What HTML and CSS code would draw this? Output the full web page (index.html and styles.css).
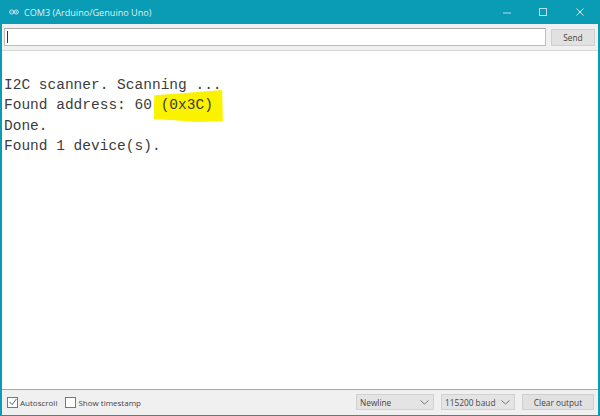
FILE: index.html
```html
<!DOCTYPE html>
<html lang="en">
<head>
<meta charset="utf-8">
<title>COM3 (Arduino/Genuino Uno)</title>
<link rel="stylesheet" href="styles.css">
</head>
<body>
<div class="window">
  <header class="titlebar">
    <svg class="logo" width="10" height="6" viewBox="0 0 14 8"><circle cx="3.800" cy="4" r="2.900" fill="none" stroke="#d8eef2" stroke-width="1.300"/><circle cx="10.200" cy="4" r="2.900" fill="none" stroke="#d8eef2" stroke-width="1.300"/><path d="M2.600 4h2.400M9 4h2.400M10.200 2.800v2.400" stroke="#d8eef2" stroke-width=".8"/></svg>
    <span class="title">COM3 (Arduino/Genuino Uno)</span>
    <div class="controls">
      <svg class="ctl" width="8" height="10" viewBox="0 0 8 10"><path d="M0 6h8" stroke="#b5e0e8" stroke-width="1"/></svg>
      <svg class="ctl" width="8" height="10" viewBox="0 0 8 10"><rect x=".5" y="1.500" width="7" height="7" fill="none" stroke="#b5e0e8" stroke-width="1"/></svg>
      <svg class="ctl" width="8" height="10" viewBox="0 0 8 10"><path d="M.5 1.500l7 7M7.500 1.500l-7 7" stroke="#d5eef3" stroke-width="1"/></svg>
    </div>
  </header>
  <div class="body">
    <div class="sendbar">
      <div class="input"><span class="caret"></span></div>
      <div class="btn send">Send</div>
    </div>
    <div class="output">
      <div class="line">I2C scanner. Scanning ...</div>
      <div class="line">Found address: 60 <span class="mark">(0x3C)</span></div>
      <div class="line">Done.</div>
      <div class="line">Found 1 device(s).</div>
    </div>
    <footer class="statusbar">
      <div class="check"><span class="box"><svg width="10" height="10" viewBox="0 0 12 12"><path d="M2 6l3 3.200 5.200-7" fill="none" stroke="#666" stroke-width="1.200"/></svg></span>Autoscroll</div>
      <div class="check"><span class="box"></span>Show timestamp</div>
      <div class="spacer"></div>
      <div class="select newline">Newline<svg width="9" height="5" viewBox="0 0 9 5"><path d="M.5.500l4 3.500 4-3.500" fill="none" stroke="#777"/></svg></div>
      <div class="select baud">115200 baud<svg width="9" height="5" viewBox="0 0 9 5"><path d="M.5.500l4 3.500 4-3.500" fill="none" stroke="#777"/></svg></div>
      <div class="btn clear">Clear output</div>
    </footer>
  </div>
</div>
</body>
</html>
```

FILE: styles.css
```css
* { box-sizing: border-box; }
html, body { margin: 0; padding: 0; }
body { width: 600px; height: 416px; overflow: hidden; background: #fff; font-family: "Open Sans", "Liberation Sans", sans-serif; color: #444; }
.window { width: 600px; height: 416px; display: flex; flex-direction: column; background: #0a9cb4; }
.titlebar { height: 24px; flex: none; display: flex; align-items: center; padding-left: 9px; color: #dff2f5; font-size: 9.100px; }
.logo { margin-right: 5px; }
.controls { margin-left: auto; display: flex; align-items: center; }
.ctl { margin-right: 28px; }
.controls .ctl:nth-child(2) { margin-right: 29px; }
.controls .ctl:last-child { margin-right: 16px; }
.body { flex: 1; display: flex; flex-direction: column; margin: 0 2px 1px 2px; background: #f0f0f0; min-height: 0; }
.sendbar { height: 26px; flex: none; display: flex; align-items: center; padding: 0 3px 0 2px; gap: 5px; }
.input { flex: 1; height: 18px; background: #fff; border: 1px solid #bdbdbd; border-top-color: #aaa; display: flex; align-items: center; padding-left: 2px; }
.caret { width: 1px; height: 12px; background: #333; }
.btn { display: flex; align-items: center; justify-content: center; background: #e1e1e1; border: 1px solid #cfcfcf; font-size: 8.300px; color: #444; }
.send { width: 44px; height: 17px; }
.output { flex: 1; background: #fff; padding: 23.500px 0 0 2px; font-family: "Liberation Mono", monospace; font-size: 14.500px; line-height: 20.500px; color: #3c3c3c; border-top: 1px solid #d8d8d8; border-bottom: 1px solid #a8a8a8; isolation: isolate; }
.line { height: 20.500px; white-space: pre; }
.mark { position: relative; }
.mark::before { content: ""; position: absolute; z-index: -1; left: -7px; right: -10px; top: -7px; height: 33px; background: #fbf200; clip-path: polygon(1% 16%, 50% 8%, 99% 0, 100% 95%, 60% 97%, 30% 92%, 0 88%); }
.statusbar { height: 25px; flex: none; display: flex; align-items: center; padding: 0 4px 1px 5px; font-size: 8.300px; color: #444; }
.check { display: flex; align-items: center; margin-right: 8px; font-size: 8px; }
.box { width: 11px; height: 11px; border: 1px solid #777; background: #fff; margin-right: 2px; display: flex; align-items: center; justify-content: center; }
.box svg { flex: none; }
.spacer { flex: 1; }
.select { height: 16px; display: flex; align-items: center; justify-content: space-between; padding: 0 4px 0 3px; background: #e4e4e4; border: 1px solid #d2d2d2; font-size: 8.300px; color: #444; }
.newline { width: 78px; margin-right: 7px; }
.baud { width: 74px; margin-right: 7px; }
.clear { width: 72px; height: 16px; }
```
